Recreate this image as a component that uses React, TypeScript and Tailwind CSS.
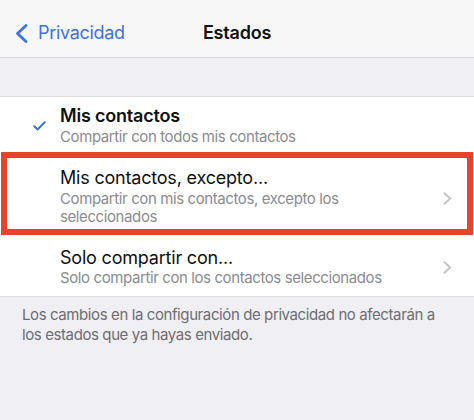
import React from "react";

const font = { fontFamily: "Inter, 'Noto Sans', 'Liberation Sans', sans-serif" };

function Chevron() {
  return (
    <svg width="9" height="13" viewBox="0 0 9 13" fill="none">
      <path d="M1.5 1.2 L7.2 6.5 L1.5 11.8" stroke="#c5c5c9" strokeWidth="2" strokeLinecap="round" strokeLinejoin="round" />
    </svg>
  );
}

export default function App() {
  return (
    <div className="w-[474px] h-[420px] bg-[#efeff4] overflow-hidden antialiased" style={font}>
      {/* nav */}
      <div className="h-[58px] bg-[#f7f7f8] border-b border-[#d8d8dc] relative flex items-start pt-[22px]">
        <div className="flex items-center pl-[15px]">
          <svg width="13" height="19" viewBox="0 0 13 19" fill="none" className="mt-[1px]">
            <path d="M11 1.5 L2.5 9.5 L11 17.5" stroke="#3b74dd" strokeWidth="2.8" strokeLinecap="round" strokeLinejoin="round" />
          </svg>
          <span className="ml-[10px] text-[18px] leading-[22px] text-[#3b74dd] tracking-[-0.3px]">Privacidad</span>
        </div>
        <div className="absolute left-0 right-0 top-[22px] text-center text-[18px] leading-[22px] font-semibold text-[#111] tracking-[-0.2px]">
          Estados
        </div>
      </div>
      {/* band */}
      <div className="h-[39px] border-b border-[#dcdce0]" />
      {/* list */}
      <div className="bg-white border-b border-[#dcdce0]">
        {/* row 1 */}
        <div className="flex items-center h-[55px]">
          <div className="w-[60px] flex pl-[33px] pt-[3px]">
            <svg width="13" height="10" viewBox="0 0 13 10" fill="none">
              <path d="M1.3 5.2 L4.6 8.5 L11.7 1.3" stroke="#3b74dd" strokeWidth="2" strokeLinecap="round" strokeLinejoin="round" />
            </svg>
          </div>
          <div className="flex flex-col pt-[2px]">
            <div className="text-[18px] leading-[22px] font-semibold text-[#111] tracking-[-0.2px]">Mis contactos</div>
            <div className="mt-[1px] text-[15px] leading-[18px] text-[#8b8b90] tracking-[-0.4px]">Compartir con todos mis contactos</div>
          </div>
        </div>
        {/* row 2 highlighted */}
        <div className="mx-[1px] border-[6px] border-[#e8432d] flex items-start pt-[9px] pb-[3px]">
          <div className="flex-1 pl-[53px] flex flex-col">
            <div className="text-[18px] leading-[22px] text-[#111] tracking-[-0.2px]">Mis contactos, excepto...</div>
            <div className="mt-[1px] text-[15px] leading-[18px] text-[#8b8b90] tracking-[-0.4px] w-[330px]">
              Compartir con mis contactos, excepto los seleccionados
            </div>
          </div>
          <div className="pr-[15px] pt-[25px]">
            <Chevron />
          </div>
        </div>
        {/* row 3 */}
        <div className="flex items-start pt-[12px] pb-[9px]">
          <div className="flex-1 pl-[60px] flex flex-col">
            <div className="text-[18px] leading-[22px] text-[#111] tracking-[-0.2px]">Solo compartir con...</div>
            <div className="text-[15px] leading-[18px] text-[#8b8b90] tracking-[-0.4px]">Solo compartir con los contactos seleccionados</div>
          </div>
          <div className="pr-[22px] pt-[14px]">
            <Chevron />
          </div>
        </div>
      </div>
      {/* footer */}
      <div className="pl-[22px] pr-[20px] pt-[8px] text-[15px] leading-[20px] text-[#6d6d72] tracking-[-0.4px]">
        Los cambios en la configuración de privacidad no afectarán a los estados que ya hayas enviado.
      </div>
    </div>
  );
}
